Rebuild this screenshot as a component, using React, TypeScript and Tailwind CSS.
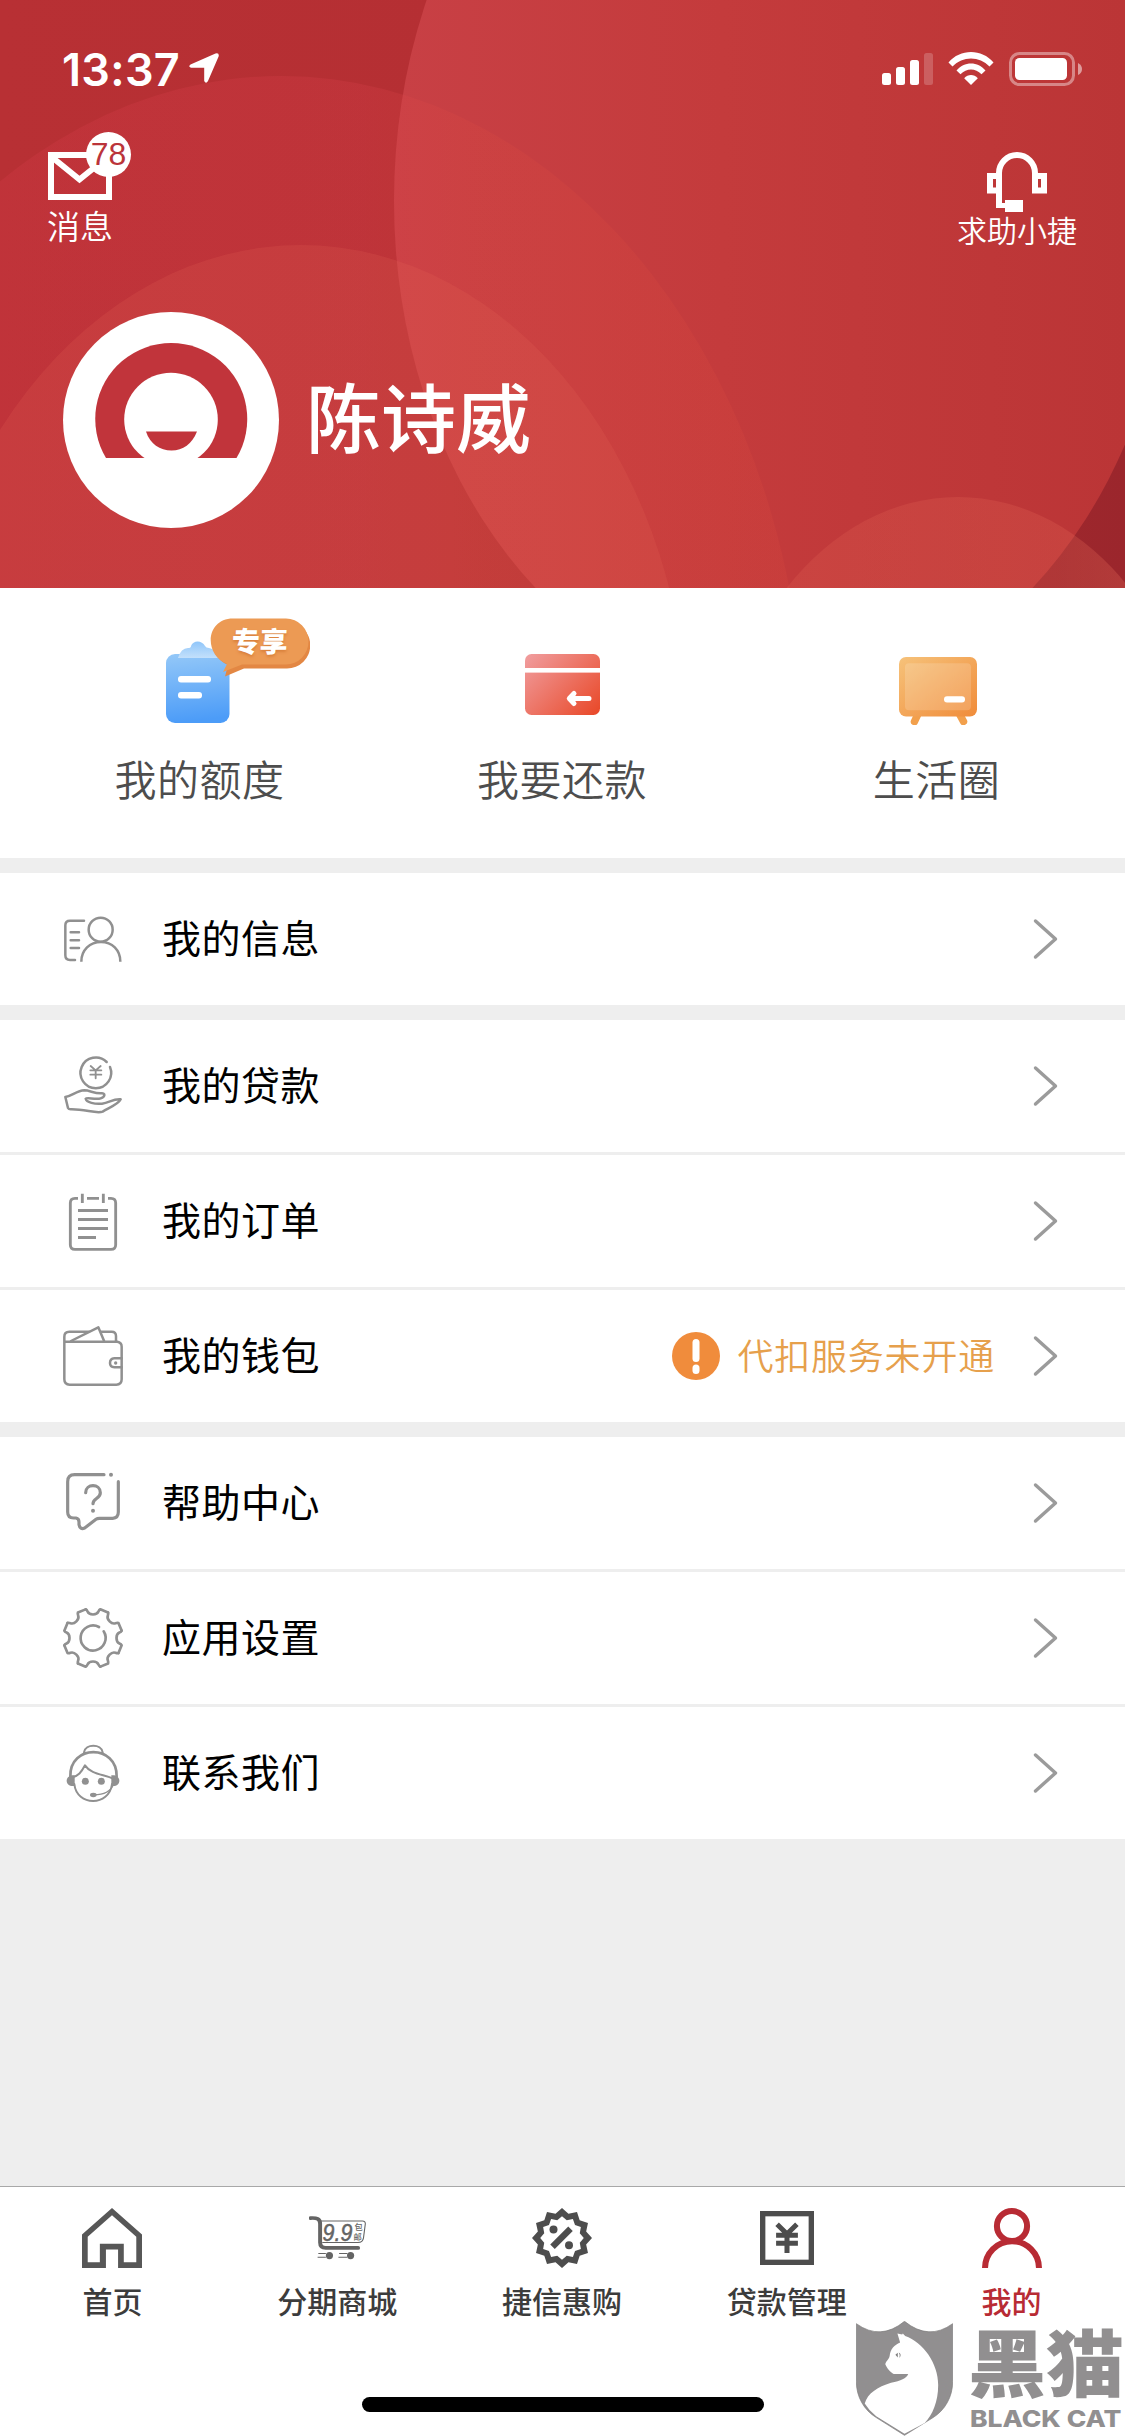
import React from "react";

const starPoints = (outer: number, inner: number) =>
  Array.from({ length: 24 }, (_, i) => {
    const r = i % 2 === 0 ? outer : inner;
    const a = (i * Math.PI) / 12;
    return `${(30 + r * Math.sin(a)).toFixed(2)},${(30 - r * Math.cos(a)).toFixed(2)}`;
  }).join(" ");

/* ---------- header ---------- */

const HeaderBackground = () => (
  <svg className="absolute inset-0 w-full h-full" viewBox="0 0 1125 588" preserveAspectRatio="none">
    <defs>
      <linearGradient id="base" x1="0" x2="1" y1="0" y2="0">
        <stop offset="0" stopColor="#b83034" />
        <stop offset="0.4" stopColor="#b52f33" />
        <stop offset="1" stopColor="#9b262c" />
      </linearGradient>
      <linearGradient id="ringA" gradientUnits="userSpaceOnUse" x1="394" x2="1125" y1="0" y2="0">
        <stop offset="0" stopColor="#c84045" />
        <stop offset="0.45" stopColor="#c43b3c" />
        <stop offset="1" stopColor="#bb3536" />
      </linearGradient>
      <linearGradient id="ringB" gradientUnits="userSpaceOnUse" x1="0" x2="807" y1="0" y2="0">
        <stop offset="0" stopColor="#e04050" stopOpacity="0.2" />
        <stop offset="0.45" stopColor="#e04450" stopOpacity="0.22" />
        <stop offset="0.6" stopColor="#e45040" stopOpacity="0.16" />
        <stop offset="1" stopColor="#e45040" stopOpacity="0.16" />
      </linearGradient>
      <linearGradient id="ringD" gradientUnits="userSpaceOnUse" x1="787" x2="1125" y1="0" y2="0">
        <stop offset="0" stopColor="#e86a58" stopOpacity="0.2" />
        <stop offset="0.8" stopColor="#e86a58" stopOpacity="0.24" />
        <stop offset="1" stopColor="#e86a58" stopOpacity="0.3" />
      </linearGradient>
    </defs>
    <rect width="1125" height="588" fill="url(#base)" />
    <ellipse cx="784" cy="201" rx="390" ry="502" fill="url(#ringA)" />
    <ellipse cx="281" cy="752" rx="524" ry="676" fill="url(#ringB)" />
    <ellipse cx="301" cy="746" rx="388" ry="501" fill="#e86a58" fillOpacity="0.18" />
    <ellipse cx="958" cy="810" rx="243" ry="313" fill="url(#ringD)" />
  </svg>
);

const StatusBar = () => (
  <div className="relative flex justify-between h-[132px] pl-[62px] pr-[43px]">
    <div className="flex items-start pt-[42px] text-white">
      <span className="text-[45px] leading-[55px] font-semibold tracking-[0.300px] w-[127px] whitespace-nowrap">13:37</span>
      <svg className="w-[30px] h-[30px] mt-[11px]" viewBox="0 0 30 30" fill="#fff">
        <path d="M1.5 11.5 L26.5 0.5 Q30.5 -0.6 29.6 3.6 L19 28 Q17 31.500 15.200 28 V14.800 H2 Q-1.200 13.500 1.500 11.500 Z" />
      </svg>
    </div>
    <svg className="w-[200px] h-[34px] mt-[52px]" viewBox="0 0 200 34" fill="#fff">
      <rect x="0" y="21" width="9" height="12" rx="2.500" />
      <rect x="14" y="15" width="9" height="18" rx="2.500" />
      <rect x="28" y="8" width="9" height="25" rx="2.500" />
      <rect x="42" y="1" width="9" height="32" rx="2.500" opacity="0.2" />
      <path d="M66.500 10.500 C78 -3.500 100 -3.500 111.500 10.500 L107.500 14.500 C97.500 3.800 80.500 3.800 70.500 14.500 Z" />
      <path d="M74.500 18.500 C82 9 96 9 103.500 18.500 L99.500 22.200 C93.500 15.800 84.500 15.800 78.500 22.200 Z" />
      <path d="M82.200 26.300 C86 22 92 22 95.800 26.300 L89 33 Z" />
      <rect x="128.500" y="1.500" width="63" height="31" rx="9" fill="none" stroke="#fff" strokeOpacity="0.4" strokeWidth="3" />
      <rect x="133" y="6" width="52" height="22" rx="4.500" />
      <path d="M196 11 Q200 13 200 17 Q200 21 196 23 Z" opacity="0.5" />
    </svg>
  </div>
);

const Header = () => (
  <header className="relative h-[588px] overflow-hidden">
    <HeaderBackground />
    <StatusBar />

    <div className="relative flex justify-between pl-[47px] pr-[48px] h-[180px] text-white">
      <div className="flex flex-col items-start">
        <div className="relative pt-5">
          <svg className="w-[66px] h-12 ml-px" viewBox="0 0 66 48" fill="none" stroke="#fff" strokeWidth="6">
            <rect x="3" y="3" width="58" height="42" />
            <path d="M5 6 L31.500 27.500 L52 11" />
          </svg>
          <span className="absolute left-[39px] top-0 w-[45px] h-[45px] rounded-full bg-white text-[#bb343a] text-[32px] leading-[45px] text-center font-['Liberation_Sans']">
            78
          </span>
        </div>
        <span className="text-[33px] leading-[40px] mt-[7px] font-[350]">消息</span>
      </div>

      <div className="flex flex-col items-center pt-5">
        <svg className="w-[60px] h-[60px]" viewBox="0 0 60 60" fill="none" stroke="#fff" strokeWidth="6">
          <path d="M12 53.500 V21 A18 18 0 0 1 48 21 V40" />
          <path d="M9 53.500 H20" strokeWidth="5" />
          <path d="M12 24 H3 V38.500 H12 M48 24 H57 V38.500 H45" />
          <rect x="18" y="48" width="18" height="12" fill="#fff" stroke="none" />
        </svg>
        <span className="text-[30px] leading-[38px] font-[350]">求助小捷</span>
      </div>
    </div>

    <div className="relative flex items-center pl-[63px] gap-[27px]">
      <svg className="w-[216px] h-[216px]" viewBox="0 0 216 216">
        <circle cx="108" cy="108" r="108" fill="#fff" />
        <path d="M43 146 A76 76 0 1 1 173.500 146 Z" fill="#c1343b" />
        <circle cx="108" cy="107.500" r="46.800" fill="#fff" />
        <path d="M83 119.500 H134 C129 132 120 138.500 108.500 138.500 C97 138.500 87 132 83 119.500 Z" fill="#c1343b" />
      </svg>
      <h1 className="text-[75px] leading-[90px] font-medium text-white">陈诗威</h1>
    </div>
  </header>
);

/* ---------- quick entries ---------- */

const QuotaIcon = () => (
  <div className="relative w-[64px] h-[84px]">
    <svg className="w-[64px] h-[84px]" viewBox="0 0 64 84">
      <defs>
        <linearGradient id="clip" x1="0" x2="0.100" y1="0" y2="1">
          <stop offset="0" stopColor="#94c8f8" />
          <stop offset="1" stopColor="#4c9cf8" />
        </linearGradient>
        <linearGradient id="clipTop" x1="0" x2="0" y1="0" y2="1">
          <stop offset="0" stopColor="#90c6fa" />
          <stop offset="1" stopColor="#c3e0fb" />
        </linearGradient>
      </defs>
      <rect x="0" y="13" width="63.500" height="69" rx="9" fill="url(#clip)" />
      <path d="M12 17 Q15 7 22 7 Q25 7 25 5 C27 -1 36 -1 39 5 Q40 7 43 7 Q50 8 52 17 Z" fill="url(#clipTop)" />
      <rect x="12" y="35" width="33" height="6.400" rx="3" fill="#fff" />
      <rect x="12" y="51" width="24" height="6.400" rx="3" fill="#fff" />
    </svg>
    {/* tag bubble over the clipboard */}
    <div className="absolute left-[44px] -top-[23px] w-[100px] h-[59px]">
      <svg className="absolute inset-0 w-[100px] h-[59px]" viewBox="0 0 100 59">
        <path d="M23 4 H77 A23 23 0 0 1 77 50.500 H34 L15 58.500 L18 47 C-6 36 -2 4 23 4 Z" fill="#e38743" />
        <path d="M23 0.500 H76 A22.500 23 0 0 1 76 46.500 H32 L13 54 L17 46 C-7 36 -4 0.500 23 0.500 Z" fill="#ec9a54" />
      </svg>
      <span className="relative block pt-[5px] text-center text-[28px] leading-[38px] font-extrabold text-white -skew-x-3 [text-shadow:0_2px_3px_#d87f3a]">
        专享
      </span>
    </div>
  </div>
);

const RepayIcon = () => (
  <svg className="w-[75px] h-[84px]" viewBox="0 0 75 84">
    <defs>
      <linearGradient id="repay" x1="0" x2="1" y1="0.100" y2="0.900">
        <stop offset="0" stopColor="#f09a9a" />
        <stop offset="1" stopColor="#e94b2c" />
      </linearGradient>
    </defs>
    <rect x="0" y="13" width="75" height="61" rx="6.500" fill="url(#repay)" />
    <rect x="0" y="27" width="75" height="4.600" fill="#fff" />
    <path d="M64 57.500 H46 M49 52.500 L44.300 57.500 L49 62.500" fill="none" stroke="#fff" strokeWidth="5" strokeLinecap="round" strokeLinejoin="round" />
  </svg>
);

const LifeIcon = () => (
  <svg className="w-[78px] h-[84px]" viewBox="0 0 78 84">
    <defs>
      <linearGradient id="life" x1="0" x2="1" y1="0" y2="1">
        <stop offset="0" stopColor="#f6c27a" />
        <stop offset="1" stopColor="#f08c3a" />
      </linearGradient>
    </defs>
    <path d="M18.500 74 L15.500 80.500 M61 74 L64.500 80.500" stroke="#f2a04c" strokeWidth="7.500" strokeLinecap="round" />
    <rect x="0" y="16" width="78" height="59.500" rx="7" fill="url(#life)" />
    <rect x="6" y="22.300" width="66" height="47" rx="4" fill="#fff" fillOpacity="0.160" />
    <rect x="45" y="55.200" width="21" height="6.200" rx="3" fill="#fff" />
  </svg>
);

const quickEntries = [
  { label: "我的额度", icon: <QuotaIcon />, wrap: "pl-6", iconWrap: "-ml-1" },
  { label: "我要还款", icon: <RepayIcon />, wrap: "pr-px", iconWrap: "" },
  { label: "生活圈", icon: <LifeIcon />, wrap: "pr-0.5", iconWrap: "ml-0.5" },
];

/* ---------- menu icons ---------- */

const iconProps = {
  className: "w-[66px] h-[66px] shrink-0",
  fill: "none",
  stroke: "#909090",
  strokeLinecap: "round" as const,
  strokeLinejoin: "round" as const,
};

const InfoIcon = () => (
  <svg {...iconProps} viewBox="60 78 198 198" strokeWidth="7.500">
    <path d="M132 122 H90 Q76 122 76 136 V226 Q76 240 90 240 H105" />
    <path d="M92 157 H117 M92 180.500 H117 M92 204 H117" />
    <circle cx="182" cy="149" r="36" />
    <path d="M124 245 C124 210 150 186 183 186 S241 210 241 245" strokeLinecap="butt" />
  </svg>
);

const LoanIcon = () => (
  <svg {...iconProps} viewBox="60 519 198 198" strokeWidth="7.500">
    <path d="M210 561 A46 46 0 1 1 200 546" />
    <path d="M152 558 L167 571 L182 558 M151 571 H184 M151 584 H184 M167 571 V595" strokeWidth="5.500" />
    <path d="M76 651 C96 648 110 632 133 631 C150 631 162 641 184 640 C197 639 196 650 182 655 C167 660 141 651 137 656 C139 668 165 673 186 671 C208 669 218 656 242 658 C236 672 210 682 188 695 C168 702 135 687 92 688 Q86 688 84 684 Z" />
  </svg>
);

const OrderIcon = () => (
  <svg {...iconProps} viewBox="60 924 198 198" strokeWidth="8.500" strokeLinecap="butt">
    <path d="M114 955 H105 Q91 955 91 969 V1094 Q91 1108 105 1108 H213 Q227 1108 227 1094 V969 Q227 955 213 955 H204" />
    <path d="M141 955 H177 M127 941 V969 M190 941 V969" />
    <path d="M114 991.500 H204 M114 1018.500 H204 M114 1045.500 H204 M114 1072.500 H168" />
  </svg>
);

const WalletIcon = () => (
  <svg {...iconProps} viewBox="60 1329 198 198" strokeWidth="7.500">
    <path d="M73 1385 H232 Q245 1387 245 1400 V1498 Q245 1514 229 1514 H89 Q73 1514 73 1498 V1370 Q73 1355 88 1355 H147" />
    <path d="M183 1355 H215 Q228 1355 228 1368 V1383" />
    <path d="M93 1383 L175 1342 L192 1382" />
    <path d="M245 1435 H223 Q210 1436 210 1449 Q210 1461 223 1462 H245" />
    <circle cx="227" cy="1449" r="5" fill="#909090" stroke="none" />
  </svg>
);

const HelpIcon = () => (
  <svg {...iconProps} viewBox="60 120 198 198" strokeWidth="9.500">
    <path d="M192 134 H104 Q83 134 83 155 V246 Q83 264 101 264 H108 Q117 266 117 276 V284 Q120 300 134 294 L168 268 Q172 265 178 265 H218 Q235 264 235 246 V155" />
    <path d="M137 188 C137 160 181 160 181 188 C181 206 159 205 159 221" />
    <circle cx="213" cy="134" r="6" fill="#909090" stroke="none" />
    <circle cx="159" cy="242" r="6" fill="#909090" stroke="none" />
  </svg>
);

const SettingsIcon = () => (
  <svg {...iconProps} viewBox="-99 -99 198 198" strokeWidth="8">
    {[0, 45, 90, 135, 180, 225, 270, 315].map((deg) => (
      <path
        key={deg}
        d="M-22 -86 C-13 -82 -20 -70.500 0 -70.500 C20 -70.500 13 -82 22 -86 L45 -76.400"
        transform={`rotate(${deg})`}
      />
    ))}
    <path d="M32 -20 A37.500 37.500 0 1 1 18 -33" />
  </svg>
);

const ContactIcon = () => (
  <svg {...iconProps} viewBox="60 930 198 198" strokeWidth="6">
    <path d="M91 1040 C88 942 232 942 230 1040" strokeWidth="8" />
    <path d="M103 1062 C110 1130 208 1130 216 1062" />
    <path d="M132 967 C136 941 184 941 188 967" />
    <path d="M92 1044 C115 1040 125 1025 135 1006 C155 1036 195 1032 228 1050" />
    <path d="M162 1094 C192 1094 212 1084 220 1064" strokeWidth="4" />
    <g fill="#909090" stroke="none">
      <path d="M104 1036 V1068 C88 1070 80 1062 80 1052 C80 1042 90 1034 104 1036 Z" />
      <path d="M214 1036 V1068 C230 1070 238 1062 238 1052 C238 1042 228 1034 214 1036 Z" />
      <circle cx="136" cy="1054" r="10.500" />
      <circle cx="184" cy="1054" r="10.500" />
      <ellipse cx="160" cy="1095" rx="10" ry="6.500" />
    </g>
  </svg>
);

const menuGroups = [
  [{ label: "我的信息", icon: <InfoIcon /> }],
  [
    { label: "我的贷款", icon: <LoanIcon /> },
    { label: "我的订单", icon: <OrderIcon /> },
    { label: "我的钱包", icon: <WalletIcon />, notice: "代扣服务未开通" },
  ],
  [
    { label: "帮助中心", icon: <HelpIcon /> },
    { label: "应用设置", icon: <SettingsIcon /> },
    { label: "联系我们", icon: <ContactIcon /> },
  ],
];

type MenuRowProps = { label: string; icon: React.ReactNode; notice?: string };

const MenuRow = ({ label, icon, notice }: MenuRowProps) => (
  <div className="flex items-center h-[132px] pl-[60px] pr-[67px] bg-white">
    {icon}
    <span className="ml-9 text-[39px] leading-[60px] tracking-[0.5px] text-black">{label}</span>
    <div className="flex items-center ml-auto">
      {notice && (
        <>
          <svg className="w-12 h-12" viewBox="0 0 48 48">
            <circle cx="24" cy="24" r="24" fill="#f08c3c" />
            <rect x="20.500" y="7" width="7" height="23" rx="3.500" fill="#fff" />
            <rect x="20.500" y="32.500" width="7" height="9.500" rx="3.500" fill="#fff" />
          </svg>
          <span className="ml-[17px] mr-[38px] pt-px text-[36px] leading-[54px] tracking-[0.800px] font-[350] text-[#e6a04c]">
            {notice}
          </span>
        </>
      )}
      <svg className="w-[25px] h-[42px]" viewBox="0 0 25 42" fill="none" stroke="#9b9b9b" strokeWidth="3.400" strokeLinecap="round" strokeLinejoin="round">
        <path d="M2.500 3 L22.500 21 L2.500 39" />
      </svg>
    </div>
  </div>
);

/* ---------- tab bar ---------- */

const HomeIcon = () => (
  <svg className="w-[60px] h-[60px]" viewBox="118 85 168 179" preserveAspectRatio="none" fill="#575757" fillRule="evenodd">
    <path d="M202 85 L286 164 V264 H219 V209 H185 V264 H118 V164 Z M202 107 L134 171 V247 H168 V192 H235 V247 H270 V171 Z" />
  </svg>
);

const CartIcon = () => (
  <svg className="w-[57px] h-[60px]" viewBox="753 85 159 179" preserveAspectRatio="none" fill="none" stroke="#646464">
    <path d="M757 115 C775 114 784 116 784 132 V188 Q784 204 800 204 H890" strokeWidth="11" strokeLinecap="round" />
    <path d="M786 124 H902 Q911 124 910 133 L905 174 Q903 188 890 188 H790" strokeWidth="3" />
    <path d="M779 221 H800 M777 232 H800 M837 221 H860 M835 232 H860" strokeWidth="3" />
    <g fill="#646464" stroke="none">
      <ellipse cx="810" cy="227" rx="10" ry="11" />
      <ellipse cx="869" cy="227" rx="10" ry="11" />
      <text x="791" y="182" fontSize="72" fontStyle="italic" fontFamily="Liberation Sans" textLength="83" lengthAdjust="spacingAndGlyphs" stroke="#646464" strokeWidth="1.500">
        9.9
      </text>
      <text x="880" y="150" fontSize="23" fontWeight="500">包</text>
      <text x="877" y="181" fontSize="23" fontWeight="500">邮</text>
    </g>
  </svg>
);

const DiscountIcon = () => (
  <svg className="w-[60px] h-[60px]" viewBox="0 0 60 60">
    <polygon points={starPoints(30, 25)} fill="#4d4d4d" />
    <polygon points={starPoints(21.8, 18.4)} fill="#fff" />
    <path d="M20.500 38.700 L38.500 20.700" stroke="#4d4d4d" strokeWidth="6.400" />
    <circle cx="21.500" cy="21.500" r="4" fill="#4d4d4d" />
    <circle cx="37" cy="37.300" r="4" fill="#4d4d4d" />
  </svg>
);

const LoanManageIcon = () => (
  <svg className="w-[54px] h-[60px]" viewBox="478 84 161 180" preserveAspectRatio="none" fill="none" stroke="#4d4d4d">
    <rect x="486" y="101" width="145" height="146" strokeWidth="16" />
    <path d="M529 133 L558.500 162 L588 133 M526 166 H591 M526 190 H591 M558.500 160 V219" strokeWidth="15" />
  </svg>
);

const MineIcon = () => (
  <svg className="w-[60px] h-[60px]" viewBox="1141 84 179 180" preserveAspectRatio="none" fill="none" stroke="#b82b34" strokeWidth="18">
    <circle cx="1230.500" cy="138" r="45" />
    <path d="M1150 264 A80.500 80.500 0 0 1 1311 264" />
  </svg>
);

const tabs = [
  { label: "首页", icon: <HomeIcon /> },
  { label: "分期商城", icon: <CartIcon /> },
  { label: "捷信惠购", icon: <DiscountIcon /> },
  { label: "贷款管理", icon: <LoanManageIcon /> },
  { label: "我的", icon: <MineIcon />, active: true },
];

const Watermark = () => (
  <div className="absolute right-0 bottom-0 flex w-[269px] h-[115px] text-[#918f90]">
    <svg className="w-[97px] h-[115px]" viewBox="766 424 288 343" preserveAspectRatio="none">
      <path
        d="M767 432 Q839 484 910 425 Q982 484 1053 432 V605 C1053 650 1030 690 995 712 L910 765 L826 712 C790 690 767 650 767 605 Z"
        fill="#918f90"
        stroke="#7d7c7c"
        strokeWidth="2"
      />
      <path
        d="M889 461 L903 464 L905 461 L912 469 C965 487 1010 550 1010 615 C1010 665 993 705 970 728 L910 760 L826 708 Q805 692 792 670 C800 640 830 620 870 608 C900 602 915 596 921 582 H878 C868 577 858 565 853 553 C855 543 864 540 866 528 C868 508 880 495 897 488 Z"
        fill="#fff"
      />
      <path d="M883 525 L890 519 V533 Z M893 518 Q903 523 895 534 Q898 526 893 518 Z" fill="#7d7c7c" />
    </svg>
    <div className="flex flex-col items-start ml-[15px] w-[157px]">
      <span className="text-[73px] leading-[74px] mt-[7px] font-black whitespace-nowrap origin-left scale-x-[1.07]">黑猫</span>
      <span className="text-[23px] leading-[24px] mt-[5px] ml-0.5 font-extrabold whitespace-nowrap origin-left scale-x-[1.15]">
        BLACK CAT
      </span>
    </div>
  </div>
);

const App = () => {
  return (
    <div className="relative flex flex-col w-[1125px] h-[2436px] overflow-hidden bg-[#eeeeee] font-[Inter,'Noto_Sans_CJK_SC',sans-serif]">
      <Header />

      {/* Quick entries */}
      <section className="grid grid-cols-3 h-[270px] pt-[53px] bg-white">
        {quickEntries.map((item) => (
          <div key={item.label} className={`flex flex-col items-center ${item.wrap}`}>
            <div className={item.iconWrap}>{item.icon}</div>
            <span className="mt-6 text-[42px] leading-[64px] tracking-[0.500px] font-[350] text-[#4d4d4d]">{item.label}</span>
          </div>
        ))}
      </section>

      {/* Menu */}
      {menuGroups.map((group, i) => (
        <section key={i} className="flex flex-col gap-[3px] mt-[15px]">
          {group.map((row) => (
            <MenuRow key={row.label} {...row} />
          ))}
        </section>
      ))}

      {/* Tab bar */}
      <nav className="grid grid-cols-5 h-[250px] mt-auto pt-[21px] pr-px bg-white border-t border-[#a8a8a8]">
        {tabs.map((tab) => (
          <div key={tab.label} className="flex flex-col items-center">
            {tab.icon}
            <span className={`mt-3 text-[30px] leading-[44px] font-medium ${tab.active ? "text-[#b82b34]" : "text-[#3c3c3c]"}`}>
              {tab.label}
            </span>
          </div>
        ))}
      </nav>

      {/* Home indicator */}
      <div className="absolute left-[362px] bottom-6 w-[402px] h-[15px] rounded-full bg-black" />
      <Watermark />
    </div>
  );
};

export default App;
